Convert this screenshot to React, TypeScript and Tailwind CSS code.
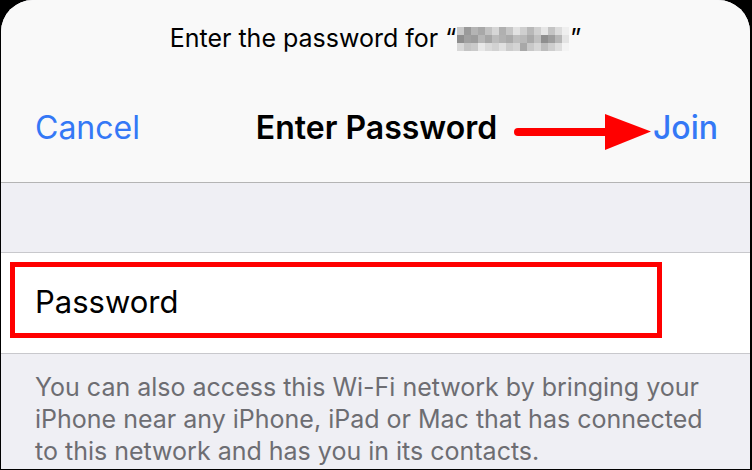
const mosaic = [
  ['#c9c9c9', '#9a9a9a', '#b4b4b4', '#a8a8a8', '#c2c2c2', '#d6d6d6', '#b0b0b0', '#c6c6c6', '#e2e2e2', '#cfcfcf', '#b8b8b8', '#d0d0d0', '#e6e6e6', '#c4c4c4', '#dcdcdc', '#efefef'],
  ['#8e8e8e', '#a0a0a0', '#9c9c9c', '#b6b6b6', '#a6a6a6', '#bcbcbc', '#b2b2b2', '#aaaaaa', '#bebebe', '#b9b9b9', '#a9a9a9', '#c0c0c0', '#8f8f8f', '#9e9e9e', '#b7b7b7', '#e4e4e4'],
  ['#d8d8d8', '#c4c4c4', '#cacaca', '#e8e8e8', '#dadada', '#d2d2d2', '#e0e0e0', '#cccccc', '#d4d4d4', '#a8a8a8', '#c8c8c8', '#d6d6d6', '#bdbdbd', '#cecece', '#dedede', '#f4f4f4'],
];

function BlurredName() {
  return (
    <span className="inline-flex flex-col align-middle mx-[1px] -mt-[3px]">
      {mosaic.map((row, r) => (
        <span key={r} className="flex">
          {row.map((c, i) => (
            <span key={i} className="block w-[7px] h-[8px]" style={{ backgroundColor: c }} />
          ))}
        </span>
      ))}
    </span>
  );
}

function Arrow() {
  return (
    <svg width="140" height="44" viewBox="0 0 140 44" className="shrink-0">
      <line x1="5" y1="26" x2="95" y2="26" stroke="#ff0000" strokeWidth="8" strokeLinecap="round" />
      <polygon points="92,8 92,44 138,25.5" fill="#ff0000" />
    </svg>
  );
}

export default function App() {
  return (
    <div className="w-[752px] h-[470px] bg-black pl-px pr-[2px] pb-px" style={{ fontFamily: 'Inter, "Noto Sans", sans-serif' }}>
      <div className="h-full rounded-t-[32px] overflow-hidden flex flex-col bg-[#efeff4]">
        <div className="h-[183px] bg-[#f9f9f9] border-b border-[#b4b4b4] shrink-0">
          <p className="pt-[23px] text-center text-[25px] leading-[30px] text-black">
            Enter the password for “<BlurredName />”
          </p>
          <div className="mt-[53px] grid grid-cols-[1fr_auto_1fr] items-center pl-[34px] pr-[32px]">
            <span className="text-[32px] leading-[36px] text-[#3478f6]">Cancel</span>
            <span className="text-[32px] leading-[36px] font-semibold text-black">Enter Password</span>
            <div className="flex items-center justify-end">
              <Arrow />
              <span className="text-[32px] leading-[36px] font-medium text-[#3478f6]">Join</span>
            </div>
          </div>
        </div>
        <div className="h-[70px] border-b border-[#c8c8cc] shrink-0" />
        <div className="h-[101px] bg-white border-b border-[#c8c8cc] shrink-0 pt-[9px] pl-[9px]">
          <div className="w-[652px] h-[76px] border-[5px] border-[#ff0000] flex items-center pl-[20px] pt-[4px]">
            <span className="text-[31px] leading-[36px] text-black">Password</span>
          </div>
        </div>
        <p className="px-[34px] pt-[17px] text-[25px] leading-[32px] text-[#6d6d72]">
          You can also access this Wi-Fi network by bringing your iPhone near any iPhone, iPad or Mac that has connected to this network and has you in its contacts.
        </p>
      </div>
    </div>
  );
}
